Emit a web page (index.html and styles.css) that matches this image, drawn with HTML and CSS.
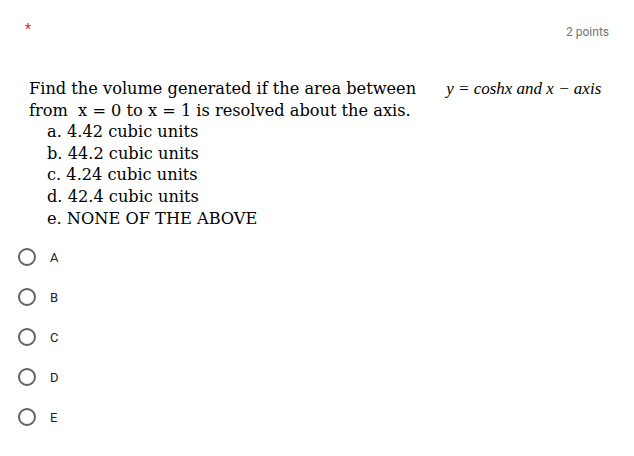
FILE: index.html
```html
<!DOCTYPE html>
<html>
<head>
<meta charset="utf-8">
<link rel="stylesheet" href="styles.css">
</head>
<body>
<div class="card">
  <div class="header">
    <span class="req">*</span>
    <span class="points">2 points</span>
  </div>
  <div class="question">
    <div class="line">Find the volume generated if the area between<span class="math">y = coshx and x − axis</span></div>
    <div class="line">from&nbsp; x = 0 to x = 1 is resolved about the axis.</div>
    <div class="choice">a. 4.42 cubic units</div>
    <div class="choice">b. 44.2 cubic units</div>
    <div class="choice">c. 4.24 cubic units</div>
    <div class="choice">d. 42.4 cubic units</div>
    <div class="choice">e. NONE OF THE ABOVE</div>
  </div>
  <div class="options">
    <label class="opt"><span class="radio"></span><span class="lbl">A</span></label>
    <label class="opt"><span class="radio"></span><span class="lbl">B</span></label>
    <label class="opt"><span class="radio"></span><span class="lbl">C</span></label>
    <label class="opt"><span class="radio"></span><span class="lbl">D</span></label>
    <label class="opt"><span class="radio"></span><span class="lbl">E</span></label>
  </div>
</div>
</body>
</html>
```
FILE: styles.css
```css
html, body { margin: 0; padding: 0; background: #fff; }
.card { width: 634px; height: 456px; box-sizing: border-box; padding: 0 24px 0 24px; font-family: Roboto, "Liberation Sans", sans-serif; }
.header { display: flex; justify-content: space-between; align-items: flex-start; padding-top: 22px; height: 56px; box-sizing: border-box; }
.req { color: #d93025; font-size: 14px; line-height: 14px; margin-left: 1px; }
.points { color: #70757a; font-size: 12px; line-height: 16px; margin-top: 2px; margin-right: 1px; }
.question { margin-top: 22px; padding-left: 5px; font-family: "DejaVu Serif", serif; font-size: 16.2px; line-height: 21.6px; color: #000; }
.math { font-family: "Liberation Serif", serif; font-style: italic; font-size: 17px; margin-left: 30px; }
.choice { padding-left: 18px; }
.options { margin-top: 18px; display: flex; flex-direction: column; gap: 20px; }
.opt { display: flex; align-items: center; height: 20px; }
.radio { width: 14px; height: 14px; border: 2px solid #5f6368; border-radius: 50%; margin-left: -6px; }
.lbl { margin-left: 14px; font-size: 13px; color: #202124; }
```
